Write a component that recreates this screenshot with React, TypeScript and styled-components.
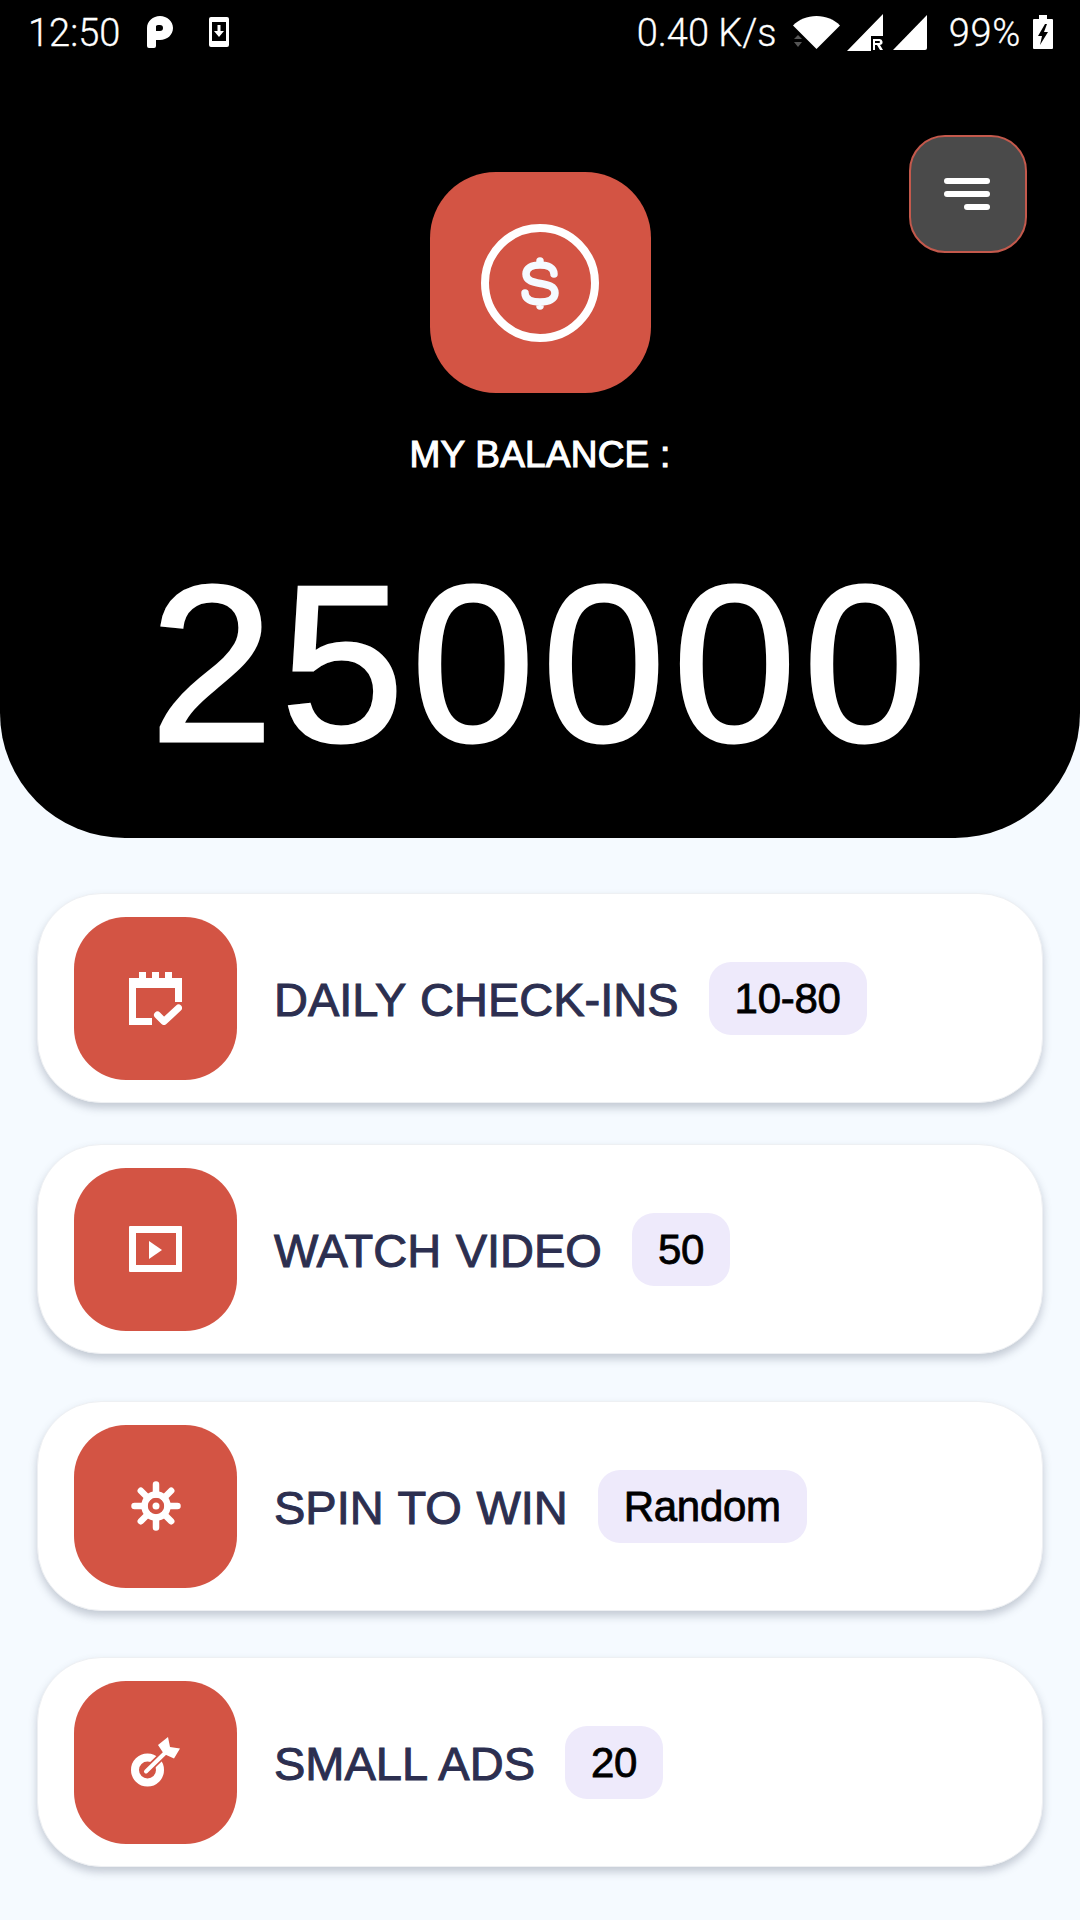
import React from 'react';
import styled, { createGlobalStyle } from 'styled-components';

const GlobalStyle = createGlobalStyle`
  html, body {
    margin: 0;
    padding: 0;
    background: #f5faff;
  }
  * {
    box-sizing: border-box;
  }
`;

const Page = styled.div`
  position: relative;
  width: 1080px;
  height: 1920px;
  overflow: hidden;
  background: #f5faff;
  font-family: 'Liberation Sans', Arial, sans-serif;
`;

const Header = styled.header`
  position: relative;
  height: 838px;
  background: #000;
  border-radius: 0 0 125px 125px;
  display: flex;
  flex-direction: column;
  align-items: center;
`;

const StatusBar = styled.div`
  width: 100%;
  height: 64px;
  padding: 0 27px 0 28px;
  display: flex;
  align-items: center;
  color: #fff;
  font-family: Roboto, sans-serif;
  font-weight: 300;
  font-size: 38px;
`;

const StatusText = styled.span<{ $ml?: number; $ls?: number }>`
  margin-left: ${(p) => p.$ml || 0}px;
  padding-top: 2px;
  line-height: 62px;
  letter-spacing: ${(p) => p.$ls || 0}px;
  white-space: nowrap;
  -webkit-text-stroke: 0.3px #fff;
`;

const StatusIcon = styled.svg<{ $ml?: number }>`
  display: block;
  flex: none;
  margin-left: ${(p) => p.$ml || 0}px;
`;

const Spacer = styled.div`
  flex: 1;
`;

const MenuButton = styled.button`
  position: absolute;
  top: 135px;
  right: 53px;
  width: 118px;
  height: 118px;
  padding: 41px 35px 0;
  background: #4a4a4a;
  border: 2px solid #c4594c;
  border-radius: 36px;
  display: flex;
  flex-direction: column;
  align-items: flex-end;
  gap: 7px;
`;

const MenuLine = styled.span<{ $w: number }>`
  display: block;
  width: ${(p) => p.$w}px;
  height: 6px;
  border-radius: 3px;
  background: #fff;
`;

const CoinBox = styled.div`
  width: 221px;
  height: 221px;
  margin-top: 108px;
  border-radius: 66px;
  background: #d35444;
  display: flex;
  align-items: center;
  justify-content: center;
`;

const BalanceLabel = styled.div`
  margin-top: 41px;
  color: #fff;
  font-size: 37px;
  line-height: 42px;
  letter-spacing: 0.2px;
  -webkit-text-stroke: 1.1px #fff;
`;

const BalanceValue = styled.div`
  margin-top: 58px;
  padding-left: 4px;
  color: #fff;
  font-size: 222px;
  line-height: 260px;
  letter-spacing: 7.2px;
  -webkit-text-stroke: 3px #fff;
`;

const TaskList = styled.main`
  padding: 0 37px;
`;

const Card = styled.section<{ $mt: number }>`
  height: 210px;
  margin-top: ${(p) => p.$mt}px;
  padding-left: 36px;
  background: #fff;
  border: 1px solid #eef0f3;
  border-radius: 64px;
  box-shadow: 0 5px 8px rgba(70, 80, 100, 0.28);
  display: flex;
  align-items: center;
`;

const IconBox = styled.div`
  width: 163px;
  height: 163px;
  flex: none;
  border-radius: 52px;
  background: #d35444;
  display: flex;
  align-items: center;
  justify-content: center;
`;

const CardLabel = styled.div`
  margin-left: 37px;
  padding-top: 2px;
  color: #2c2f50;
  font-size: 47px;
  word-spacing: 1.5px;
  -webkit-text-stroke: 1px #2c2f50;
  white-space: nowrap;
`;

const Badge = styled.div`
  margin-left: 30px;
  height: 73px;
  padding: 2px 26px 0;
  border-radius: 22px;
  background: #eeeafb;
  color: #000;
  font-size: 42px;
  letter-spacing: -0.3px;
  -webkit-text-stroke: 0.8px #000;
  display: flex;
  align-items: center;
  white-space: nowrap;
`;

const CalendarIcon = () => (
  <svg width="53" height="53" viewBox="0 0 53 53">
    <path
      fill="#fff"
      d="M0 6h10V0h7v6h6V0h7v6h6V0h7v6h10v24h-7V16H7v30h16v7H0z"
    />
    <path
      d="M28.500 43l6.500 6.500 14.500-13.500"
      fill="none"
      stroke="#fff"
      strokeWidth="7"
      strokeLinejoin="round"
      strokeLinecap="round"
    />
  </svg>
);

const VideoIcon = () => (
  <svg width="53" height="46" viewBox="0 0 53 46">
    <path
      fill="#fff"
      fillRule="evenodd"
      d="M1 0h51a1 1 0 0 1 1 1v44a1 1 0 0 1-1 1H1a1 1 0 0 1-1-1V1a1 1 0 0 1 1-1zm6 7v32h40V7z"
    />
    <path fill="#fff" d="M20 15l13 9-13 9z" />
  </svg>
);

const SpinIcon = () => (
  <svg width="50" height="50" viewBox="0 0 50 50">
    <g stroke="#fff" strokeWidth="6.500" strokeLinecap="round" fill="none">
      <path d="M25 3.500v10M25 36.500v10M3.500 25h10M36.500 25h10M9.800 9.800l7 7M33.200 33.200l7 7M9.800 40.200l7-7M33.200 16.800l7-7" />
      <circle cx="25" cy="25" r="11.500" />
    </g>
    <circle cx="25" cy="25" r="3.500" fill="#fff" />
  </svg>
);

const TargetIcon = () => (
  <svg width="50" height="50" viewBox="0 0 50 50">
    <circle cx="16.500" cy="33" r="12.500" fill="none" stroke="#fff" strokeWidth="8" />
    <path d="M20 29.500L34 16" stroke="#d35444" strokeWidth="7.500" />
    <path d="M15 34.500L34 16" stroke="#fff" strokeWidth="4" strokeLinecap="round" />
    <path fill="#fff" d="M37 0l2 10 10 1.500-6 10-10-4.500-6-9z" />
  </svg>
);

const tasks = [
  { label: 'DAILY CHECK-INS', badge: '10-80', icon: <CalendarIcon />, mt: 55 },
  { label: 'WATCH VIDEO', badge: '50', icon: <VideoIcon />, mt: 41 },
  { label: 'SPIN TO WIN', badge: 'Random', icon: <SpinIcon />, mt: 47 },
  { label: 'SMALL ADS', badge: '20', icon: <TargetIcon />, mt: 46 }
];

export default function App() {
  return (
    <Page>
      <GlobalStyle />
      <Header>
        <StatusBar>
          <StatusText>12:50</StatusText>
          <StatusIcon $ml={27} width="26" height="32" viewBox="0 0 26 32">
            <path
              fill="#fff"
              fillRule="evenodd"
              d="M0 12C0 5 6 0 13 0s13 5 13 12-6 12-13 12h-4v6a2 2 0 0 1-2 2H2a2 2 0 0 1-2-2zm9-2v5h4a3 3 0 0 0 3-3 3 3 0 0 0-3-3h-1a3 3 0 0 0-3 1z"
            />
          </StatusIcon>
          <StatusIcon $ml={36} width="20" height="30" viewBox="0 0 20 30">
            <path
              fill="#fff"
              fillRule="evenodd"
              d="M2 0h16a2 2 0 0 1 2 2v26a2 2 0 0 1-2 2H2a2 2 0 0 1-2-2V2a2 2 0 0 1 2-2zm1 5v19h14V5z"
            />
            <path fill="#fff" d="M8.500 8h3v6H15l-5 6-5-6h3.500z" />
          </StatusIcon>
          <Spacer />
          <StatusText>0.40 K/s</StatusText>
          <StatusIcon $ml={16} width="47" height="33" viewBox="0 0 47 33">
            <path fill="#fff" d="M0 9.500C6 3.500 14 0 23.500 0S41 3.500 47 9.500L23.500 33l-9-9z" />
            <path fill="#555" d="M1 23l4-4 4 4zM1 26h8l-4 5z" />
          </StatusIcon>
          <StatusIcon $ml={7} width="36" height="37" viewBox="0 0 36 37">
            <path fill="#fff" d="M36 0v22H24v15H0z" />
            <path fill="#fff" d="M26 36V25h6a3 3 0 0 1 1 6l3 5h-3l-3-5h-2v5zm2-9v2h4a1 1 0 0 0 0-2z" />
          </StatusIcon>
          <StatusIcon $ml={10} width="34" height="35" viewBox="0 0 34 35">
            <path fill="#fff" d="M34 0v33a2 2 0 0 1-2 2H0z" />
          </StatusIcon>
          <StatusText $ml={22} $ls={0.7}>99%</StatusText>
          <StatusIcon $ml={12} width="20" height="34" viewBox="0 0 20 34">
            <path
              fill="#fff"
              fillRule="evenodd"
              d="M6 0h8v4h5a1 1 0 0 1 1 1v28a1 1 0 0 1-1 1H1a1 1 0 0 1-1-1V5a1 1 0 0 1 1-1h5zm6 9l-7 12h4l-2 9 8-13h-4l3-8z"
            />
          </StatusIcon>
        </StatusBar>
        <MenuButton aria-label="menu">
          <MenuLine $w={46} />
          <MenuLine $w={46} />
          <MenuLine $w={26} />
        </MenuButton>
        <CoinBox>
          <svg width="118" height="118" viewBox="0 0 118 118">
            <circle cx="59" cy="59" r="55" fill="none" stroke="#fff" strokeWidth="8" />
            <path
              d="M73 50c0-6-6-9-14-9s-14 3-14 9c0 14 29 5 29 19 0 6-6 9-15 9s-15-3-15-9M59 37v4M59 78v4"
              fill="none"
              stroke="#f5faff"
              strokeWidth="7.500"
              strokeLinecap="round"
            />
          </svg>
        </CoinBox>
        <BalanceLabel>MY BALANCE :</BalanceLabel>
        <BalanceValue>250000</BalanceValue>
      </Header>
      <TaskList>
        {tasks.map((t) => (
          <Card key={t.label} $mt={t.mt}>
            <IconBox>{t.icon}</IconBox>
            <CardLabel>{t.label}</CardLabel>
            <Badge>{t.badge}</Badge>
          </Card>
        ))}
      </TaskList>
    </Page>
  );
}
